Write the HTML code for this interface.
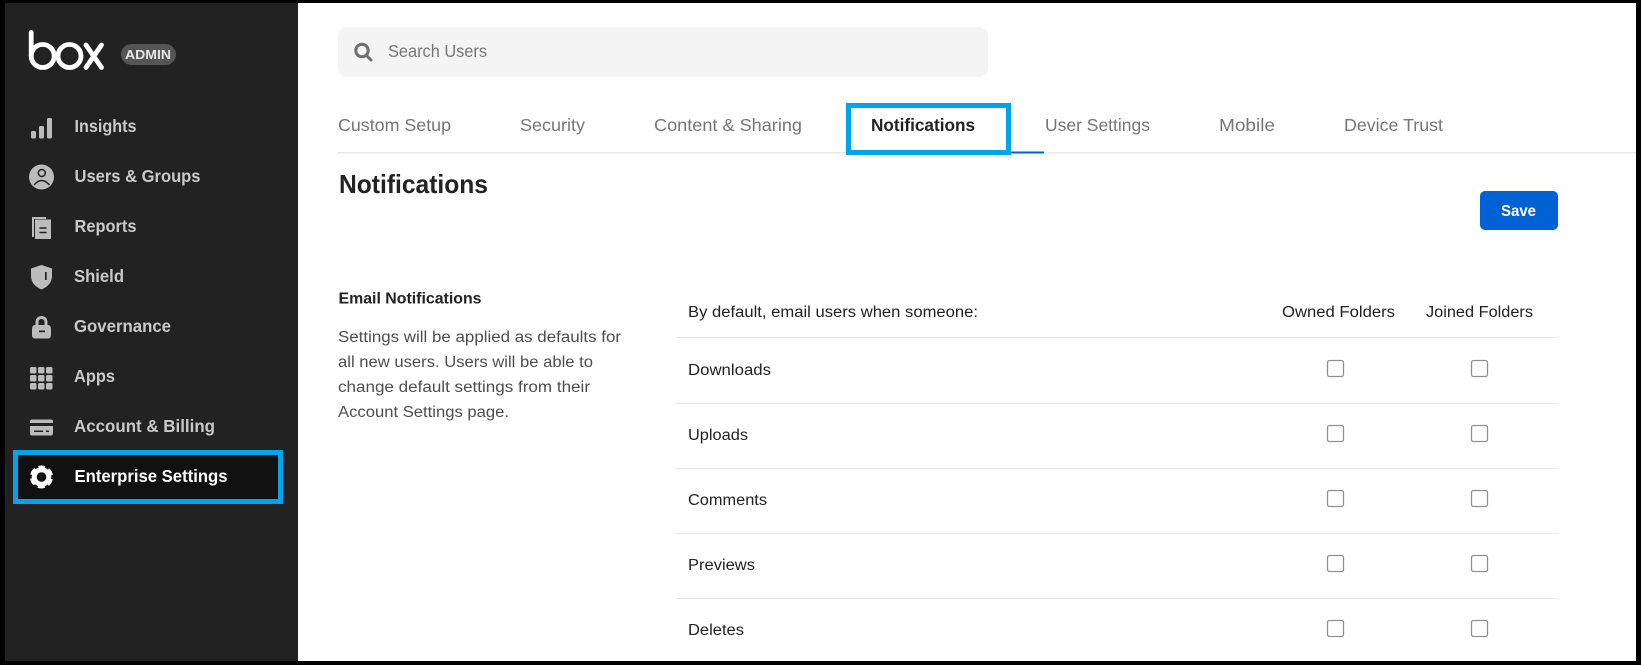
<!DOCTYPE html>
<html><head><meta charset="utf-8"><title>Notifications</title>
<style>
html,body{margin:0;padding:0;width:1641px;height:665px;overflow:hidden;background:#000}
svg{display:block}
text{font-family:"Liberation Sans",sans-serif}
.n{font-size:17.500px;font-weight:700;fill:#c9c9c9}
.t{font-size:17.500px;fill:#767676}
.p{font-size:15.500px;fill:#4e4e4e}
.r{font-size:15.500px;fill:#222}
.c{fill:#fff;stroke:#909090;stroke-width:1.3}
</style></head><body>
<svg width="1641" height="665" viewBox="0 0 1641 665" xmlns="http://www.w3.org/2000/svg">
<rect width="1641" height="665" fill="#000"/>
<rect x="5" y="3" width="1631" height="658" fill="#fff"/>
<rect x="5" y="3" width="293" height="658" fill="#222"/>

<!-- logo -->
<g fill="none" stroke="#fff" stroke-width="4.800" stroke-linecap="round">
<path d="M31.200 32.500V56"/><circle cx="42.700" cy="56" r="11.500"/><circle cx="69.500" cy="56" r="11.500"/>
<path d="M86 45L101.500 67.500M101.500 45L86 67.500"/>
</g>
<rect x="121" y="44" width="55" height="21" rx="10.500" fill="#555"/>
<text x="125" y="59" font-size="13" font-weight="700" fill="#e4e4e4" textLength="46" lengthAdjust="spacingAndGlyphs">ADMIN</text>

<!-- nav icons -->
<g fill="#bcbcbc">
<rect x="31" y="131" width="5" height="7.500" rx="1.500"/><rect x="39" y="126" width="5" height="12.500" rx="1.500"/><rect x="47" y="118" width="5" height="20.500" rx="1.500"/>
<circle cx="41.500" cy="177" r="12.500"/>
<path d="M32 217H46V219H34V237H32Z"/><rect x="35" y="219.500" width="16" height="19.500"/>
<path d="M41.500 265L52 268.500V276C52 282.500 47.500 287 41.500 289.500C35.500 287 31 282.500 31 276V268.500Z"/>
<path d="M32 329.500Q32 325 35 325H35.500V322.500C35.500 318.500 38 316 41.500 316S47.500 318.500 47.500 322.500V325H48Q51 325 51 329.500V335Q51 338.500 48 338.500H35Q32 338.500 32 335ZM38.500 325H44.500V322.500C44.500 320 43.500 319 41.500 319S38.500 320 38.500 322.500Z" fill-rule="evenodd"/>
<g>
<rect x="30" y="367" width="6.500" height="6.500" rx="1.500"/><rect x="38" y="367" width="6.500" height="6.500" rx="1.500"/><rect x="46" y="367" width="6.500" height="6.500" rx="1.500"/>
<rect x="30" y="375" width="6.500" height="6.500" rx="1.500"/><rect x="38" y="375" width="6.500" height="6.500" rx="1.500"/><rect x="46" y="375" width="6.500" height="6.500" rx="1.500"/>
<rect x="30" y="383" width="6.500" height="6.500" rx="1.500"/><rect x="38" y="383" width="6.500" height="6.500" rx="1.500"/><rect x="46" y="383" width="6.500" height="6.500" rx="1.500"/>
</g>
<path d="M30 421.500Q30 419.500 32 419.500H51Q53 419.500 53 421.500V423H30Z"/>
<path d="M30 426H53V433Q53 435.500 51 435.500H32Q30 435.500 30 433Z"/>
</g>
<g fill="none" stroke="#222" stroke-width="1.500" stroke-linecap="round">
<circle cx="41.800" cy="173" r="3.500"/><path d="M34.500 184.500Q41.800 176.500 49 184.500"/>
<path d="M40 228H46M40 232.500H46"/>
</g>
<rect x="45" y="272" width="1.700" height="8" fill="#222"/>
<rect x="39" y="330.500" width="6" height="1.700" fill="#222"/>
<rect x="34" y="430.500" width="9" height="1.500" fill="#222"/><rect x="46" y="430.500" width="3" height="1.500" fill="#222"/>

<!-- selected nav -->
<rect x="15.500" y="452.500" width="265" height="49" fill="#111" stroke="#00a4e8" stroke-width="5"/>
<g fill="none" stroke="#fff">
<circle cx="41.500" cy="477" r="7.300" stroke-width="5"/>
<circle cx="41.500" cy="477" r="9.500" stroke-width="4" stroke-dasharray="6.400 3.550" stroke-dashoffset="3.200" transform="rotate(-90 41.500 477)"/>
</g>

<!-- nav text -->
<text class="n" x="74.500" y="132" textLength="62" lengthAdjust="spacingAndGlyphs">Insights</text>
<text class="n" x="74.500" y="182" textLength="126" lengthAdjust="spacingAndGlyphs">Users &amp; Groups</text>
<text class="n" x="74.500" y="232" textLength="62" lengthAdjust="spacingAndGlyphs">Reports</text>
<text class="n" x="74" y="282" textLength="50" lengthAdjust="spacingAndGlyphs">Shield</text>
<text class="n" x="74" y="332" textLength="97" lengthAdjust="spacingAndGlyphs">Governance</text>
<text class="n" x="74" y="382" textLength="41" lengthAdjust="spacingAndGlyphs">Apps</text>
<text class="n" x="74" y="432" textLength="141" lengthAdjust="spacingAndGlyphs">Account &amp; Billing</text>
<text class="n" x="74.500" y="482" textLength="153" lengthAdjust="spacingAndGlyphs" style="fill:#fff">Enterprise Settings</text>

<!-- search -->
<rect x="338" y="27" width="650" height="50" rx="9" fill="#f4f4f4"/>
<g fill="none" stroke="#6f6f6f" stroke-width="3"><circle cx="362" cy="50.500" r="6.200"/><path d="M366.500 55.500L371 60" stroke-linecap="round"/></g>
<text x="388" y="57" font-size="17.500" fill="#767676" textLength="99" lengthAdjust="spacingAndGlyphs">Search Users</text>

<!-- tabs -->
<text class="t" x="338" y="131" textLength="113" lengthAdjust="spacingAndGlyphs">Custom Setup</text>
<text class="t" x="520" y="131" textLength="65" lengthAdjust="spacingAndGlyphs">Security</text>
<text class="t" x="654" y="131" textLength="148" lengthAdjust="spacingAndGlyphs">Content &amp; Sharing</text>
<text class="t" x="1045" y="131" textLength="105" lengthAdjust="spacingAndGlyphs">User Settings</text>
<text class="t" x="1219" y="131" textLength="56" lengthAdjust="spacingAndGlyphs">Mobile</text>
<text class="t" x="1344" y="131" textLength="99" lengthAdjust="spacingAndGlyphs">Device Trust</text>
<rect x="338" y="152" width="1298" height="1.500" fill="#e8e8e8"/>
<rect x="1011" y="151.500" width="33" height="2" fill="#0061d5"/>
<rect x="848.500" y="105.500" width="160" height="47" fill="#fff" stroke="#00a4e8" stroke-width="5"/>
<text x="871" y="131" font-size="17.500" font-weight="700" fill="#222" textLength="104" lengthAdjust="spacingAndGlyphs">Notifications</text>

<!-- heading -->
<text x="339" y="193" font-size="26" font-weight="700" fill="#222" textLength="149" lengthAdjust="spacingAndGlyphs">Notifications</text>
<rect x="1480" y="191" width="78" height="39" rx="5" fill="#0061d5"/>
<text x="1501" y="216" font-size="16" font-weight="700" fill="#fff" textLength="35" lengthAdjust="spacingAndGlyphs">Save</text>

<!-- left description -->
<text x="338.500" y="303.500" font-size="15.500" font-weight="700" fill="#222" textLength="143" lengthAdjust="spacingAndGlyphs">Email Notifications</text>
<text class="p" x="338" y="342" textLength="283" lengthAdjust="spacingAndGlyphs">Settings will be applied as defaults for</text>
<text class="p" x="338" y="367" textLength="255" lengthAdjust="spacingAndGlyphs">all new users. Users will be able to</text>
<text class="p" x="338" y="392" textLength="252" lengthAdjust="spacingAndGlyphs">change default settings from their</text>
<text class="p" x="338" y="417" textLength="171" lengthAdjust="spacingAndGlyphs">Account Settings page.</text>

<!-- table -->
<text class="r" x="688" y="317" textLength="290" lengthAdjust="spacingAndGlyphs">By default, email users when someone:</text>
<text class="r" x="1282" y="317" textLength="113" lengthAdjust="spacingAndGlyphs">Owned Folders</text>
<text class="r" x="1426" y="317" textLength="107" lengthAdjust="spacingAndGlyphs">Joined Folders</text>
<g fill="#e8e8e8">
<rect x="676" y="337" width="882" height="1"/><rect x="676" y="403" width="882" height="1"/><rect x="676" y="468" width="882" height="1"/><rect x="676" y="533" width="882" height="1"/><rect x="676" y="598" width="882" height="1"/>
</g>
<text class="r" x="688" y="375" textLength="83" lengthAdjust="spacingAndGlyphs">Downloads</text>
<text class="r" x="688" y="440" textLength="60" lengthAdjust="spacingAndGlyphs">Uploads</text>
<text class="r" x="688" y="505" textLength="79" lengthAdjust="spacingAndGlyphs">Comments</text>
<text class="r" x="688" y="570" textLength="67" lengthAdjust="spacingAndGlyphs">Previews</text>
<text class="r" x="688" y="635" textLength="56" lengthAdjust="spacingAndGlyphs">Deletes</text>
<g class="c">
<rect class="c" x="1327.500" y="360.500" width="16" height="16" rx="2"/><rect class="c" x="1471.500" y="360.500" width="16" height="16" rx="2"/>
<rect class="c" x="1327.500" y="425.500" width="16" height="16" rx="2"/><rect class="c" x="1471.500" y="425.500" width="16" height="16" rx="2"/>
<rect class="c" x="1327.500" y="490.500" width="16" height="16" rx="2"/><rect class="c" x="1471.500" y="490.500" width="16" height="16" rx="2"/>
<rect class="c" x="1327.500" y="555.500" width="16" height="16" rx="2"/><rect class="c" x="1471.500" y="555.500" width="16" height="16" rx="2"/>
<rect class="c" x="1327.500" y="620.500" width="16" height="16" rx="2"/><rect class="c" x="1471.500" y="620.500" width="16" height="16" rx="2"/>
</g>
</svg>
</body></html>
